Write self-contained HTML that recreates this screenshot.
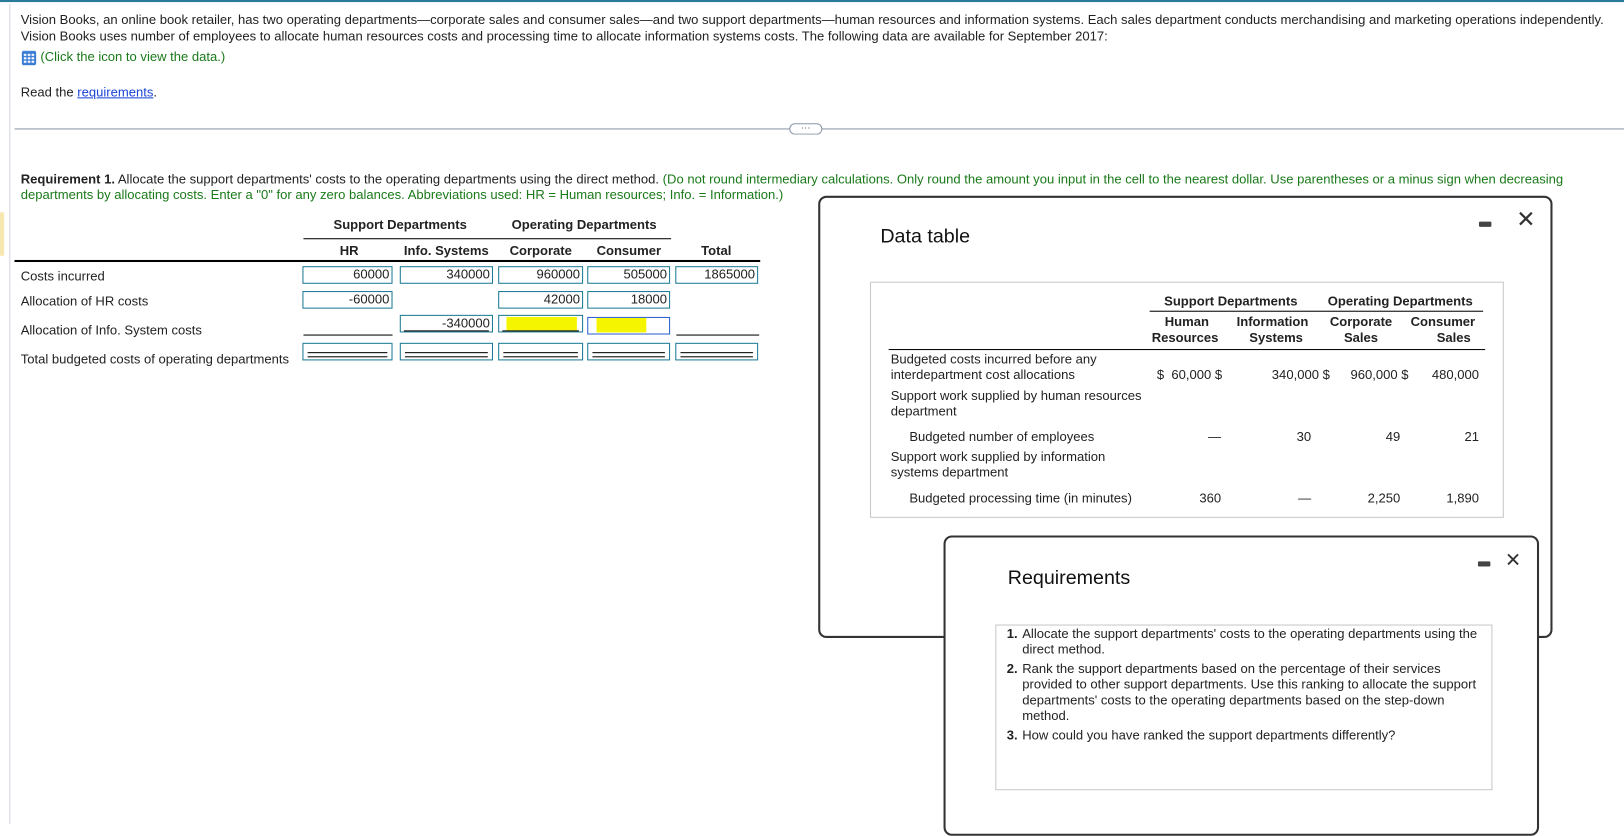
<!DOCTYPE html>
<html><head><meta charset="utf-8"><style>
*{box-sizing:border-box}
body{margin:0;width:1624px;height:796px;overflow:hidden;background:#fff;font-family:"Liberation Sans",Arial,sans-serif;color:#222;position:relative}
#w{position:absolute;left:0;top:0;width:1568px;height:769px;transform:scale(1.0357);transform-origin:0 0;font-size:12.6px}
.a{position:absolute;white-space:nowrap}
.g{color:#1a7a1a}
.in{position:absolute;height:17px;border:1px solid #1b7a95;text-align:right;padding-right:2px;line-height:15px}
.ul{position:absolute;height:0;border-top:1px solid #000}
.dbl{position:absolute;height:17px;border:1px solid #1b7a95}
.dbl::after{content:"";position:absolute;left:4px;right:4px;top:8px;height:3px;border-top:1px solid #000;border-bottom:1px solid #000}
.dlg{position:absolute;background:#fff;border:2px solid #333;border-radius:8px}
.c{position:absolute;text-align:right;white-space:nowrap}
</style></head><body><div id="w">
<div class="a" style="left:0;top:0;width:1568px;height:2px;background:#2b7a9a"></div>
<div class="a" style="left:9px;top:4px;width:1px;height:792px;background:#d0d4da"></div>
<div class="a" style="left:0;top:205px;width:4px;height:42px;background:#f7e7b0"></div>
<div class="a" style="left:20px;top:11px;line-height:16px">Vision Books, an online book retailer, has two operating departments—corporate sales and consumer sales—and two support departments—human resources and information systems. Each sales department conducts merchandising and marketing operations independently.<br>Vision Books uses number of employees to allocate human resources costs and processing time to allocate information systems costs. The following data are available for September 2017:</div>
<svg class="a" style="left:21px;top:49px" width="14" height="14" viewBox="0 0 14 14"><rect x="0" y="0" width="14" height="14" rx="2" fill="#3a7bd5"/><g fill="#fff"><rect x="2" y="3" width="2.5" height="2"/><rect x="5.8" y="3" width="2.5" height="2"/><rect x="9.5" y="3" width="2.5" height="2"/><rect x="2" y="6.3" width="2.5" height="2"/><rect x="5.8" y="6.3" width="2.5" height="2"/><rect x="9.5" y="6.3" width="2.5" height="2"/><rect x="2" y="9.6" width="2.5" height="2"/><rect x="5.8" y="9.6" width="2.5" height="2"/><rect x="9.5" y="9.6" width="2.5" height="2"/></g></svg>
<div class="a g" style="left:39px;top:48px">(Click the icon to view the data.)</div>
<div class="a" style="left:20px;top:82px">Read the <span style="color:#1a44d8;text-decoration:underline">requirements</span>.</div>
<div class="a" style="left:14px;top:124px;width:1554px;height:1px;background:#8a96a8"></div>
<div class="a" style="left:762px;top:119px;width:32px;height:11px;border:1px solid #8a96a8;border-radius:6px;background:#fff;font-size:9px;line-height:7px;text-align:center;color:#444">···</div>
<div class="a" style="left:20px;top:166px;line-height:15px"><b>Requirement 1.</b> Allocate the support departments' costs to the operating departments using the direct method. <span class="g">(Do not round intermediary calculations. Only round the amount you input in the cell to the nearest dollar. Use parentheses or a minus sign when decreasing<br>departments by allocating costs. Enter a "0" for any zero balances. Abbreviations used: HR = Human resources; Info. = Information.)</span></div>

<div class="a" style="left:322px;top:210px;font-weight:bold">Support Departments</div>
<div class="a" style="left:494px;top:210px;font-weight:bold">Operating Departments</div>
<div class="a" style="left:293px;top:230px;width:355px;height:1px;background:#000"></div>
<div class="a" style="left:328px;top:235px;font-weight:bold">HR</div>
<div class="a" style="left:390px;top:235px;font-weight:bold">Info. Systems</div>
<div class="a" style="left:492px;top:235px;font-weight:bold">Corporate</div>
<div class="a" style="left:576px;top:235px;font-weight:bold">Consumer</div>
<div class="a" style="left:677px;top:235px;font-weight:bold">Total</div>
<div class="a" style="left:14px;top:251px;width:720px;height:2px;background:#000"></div>
<div class="a" style="left:20px;top:260px">Costs incurred</div>
<div class="a" style="left:20px;top:284px">Allocation of HR costs</div>
<div class="a" style="left:20px;top:312px">Allocation of Info. System costs</div>
<div class="a" style="left:20px;top:340px">Total budgeted costs of operating departments</div>
<div class="in" style="left:292px;top:257px;width:87px">60000</div>
<div class="in" style="left:386px;top:257px;width:90px">340000</div>
<div class="in" style="left:481px;top:257px;width:82px">960000</div>
<div class="in" style="left:567px;top:257px;width:80px">505000</div>
<div class="in" style="left:652px;top:257px;width:80px">1865000</div>
<div class="in" style="left:292px;top:281px;width:87px">-60000</div>
<div class="in" style="left:481px;top:281px;width:82px">42000</div>
<div class="in" style="left:567px;top:281px;width:80px">18000</div>
<div class="ul" style="left:293px;top:323px;width:86px"></div>
<div class="in" style="left:386px;top:304px;width:90px"><div style="position:absolute;left:3px;right:3px;top:14px;border-top:1px solid #000"></div>-340000</div>
<div class="in" style="left:481px;top:304px;width:82px"><div style="position:absolute;left:7px;top:1px;width:68px;height:13px;background:#f5f500"></div><div style="position:absolute;left:3px;right:3px;top:14px;border-top:1px solid #000"></div></div>
<div class="in" style="left:567px;top:306px;width:80px;border-color:#2a5fd0"><div style="position:absolute;left:8px;top:0px;width:48px;height:14px;background:#f5f500"></div></div>
<div class="ul" style="left:653px;top:323px;width:80px"></div>
<div class="dbl" style="left:292px;top:331px;width:87px"></div>
<div class="dbl" style="left:386px;top:331px;width:90px"></div>
<div class="dbl" style="left:481px;top:331px;width:82px"></div>
<div class="dbl" style="left:567px;top:331px;width:80px"></div>
<div class="dbl" style="left:652px;top:331px;width:80px"></div>

<div class="dlg" style="left:790px;top:189px;width:709px;height:427px">
 <div class="a" style="left:58px;top:27px;font-size:19px;color:#111">Data table</div>
 <div class="a" style="left:636px;top:23px;width:12px;height:5px;background:#444;border-radius:1px"></div>
 <div class="a" style="left:672px;top:8px;font-size:22px;color:#333">✕</div>
 <div class="a" style="left:48px;top:81px;width:612px;height:228px;border:1px solid #c8c8c8"></div>
</div>
<div class="a" style="left:1124px;top:284px;font-weight:bold">Support Departments</div>
<div class="a" style="left:1282px;top:284px;font-weight:bold">Operating Departments</div>
<div class="a" style="left:1110px;top:300px;width:322px;height:1px;background:#000"></div>
<div class="a" style="left:1112px;top:304px;font-weight:bold;text-align:center;line-height:15px">&nbsp;Human<br>Resources</div>
<div class="a" style="left:1194px;top:304px;font-weight:bold;text-align:center;line-height:15px">Information<br>&nbsp;&nbsp;Systems</div>
<div class="a" style="left:1284px;top:304px;font-weight:bold;text-align:center;line-height:15px">Corporate<br>Sales</div>
<div class="a" style="left:1362px;top:304px;font-weight:bold;text-align:center;line-height:15px">Consumer<br>&nbsp;&nbsp;&nbsp;&nbsp;&nbsp;&nbsp;Sales</div>
<div class="a" style="left:858px;top:337px;width:576px;height:1px;background:#000"></div>
<div class="a" style="left:860px;top:340px;line-height:15px">Budgeted costs incurred before any<br>interdepartment cost allocations</div>
<div class="a" style="left:1117px;top:355px">$</div><div class="c" style="right:388px;top:355px">60,000 $</div>
<div class="c" style="right:284px;top:355px">340,000 $</div><div class="c" style="right:208px;top:355px">960,000 $</div><div class="c" style="right:140px;top:355px">480,000</div>
<div class="a" style="left:860px;top:375px;line-height:15px">Support work supplied by human resources<br>department</div>
<div class="a" style="left:878px;top:415px">Budgeted number of employees</div>
<div class="c" style="right:389px;top:415px">—</div><div class="c" style="right:302px;top:415px">30</div><div class="c" style="right:216px;top:415px">49</div><div class="c" style="right:140px;top:415px">21</div>
<div class="a" style="left:860px;top:434px;line-height:15px">Support work supplied by information<br>systems department</div>
<div class="a" style="left:878px;top:474px">Budgeted processing time (in minutes)</div>
<div class="c" style="right:389px;top:474px">360</div><div class="c" style="right:302px;top:474px">—</div><div class="c" style="right:216px;top:474px">2,250</div><div class="c" style="right:140px;top:474px">1,890</div>

<div class="dlg" style="left:911px;top:517px;width:575px;height:290px">
 <div class="a" style="left:60px;top:29px;font-size:19px;color:#111">Requirements</div>
 <div class="a" style="left:514px;top:23px;width:12px;height:5px;background:#444;border-radius:1px"></div>
 <div class="a" style="left:540px;top:11px;font-size:19px;color:#333">✕</div>
 <div class="a" style="left:48px;top:84px;width:480px;height:160px;border:1px solid #c8c8c8"></div>
</div>
<div class="a" style="left:972px;top:605px;line-height:15px;white-space:normal;width:460px">
<div style="display:flex"><b style="width:15px;flex:none">1.</b><span>Allocate the support departments' costs to the operating departments using the direct method.</span></div>
<div style="display:flex;margin-top:4px"><b style="width:15px;flex:none">2.</b><span>Rank the support departments based on the percentage of their services provided to other support departments. Use this ranking to allocate the support departments' costs to the operating departments based on the step-down method.</span></div>
<div style="display:flex;margin-top:4px"><b style="width:15px;flex:none">3.</b><span>How could you have ranked the support departments differently?</span></div>
</div>
</div></body></html>
